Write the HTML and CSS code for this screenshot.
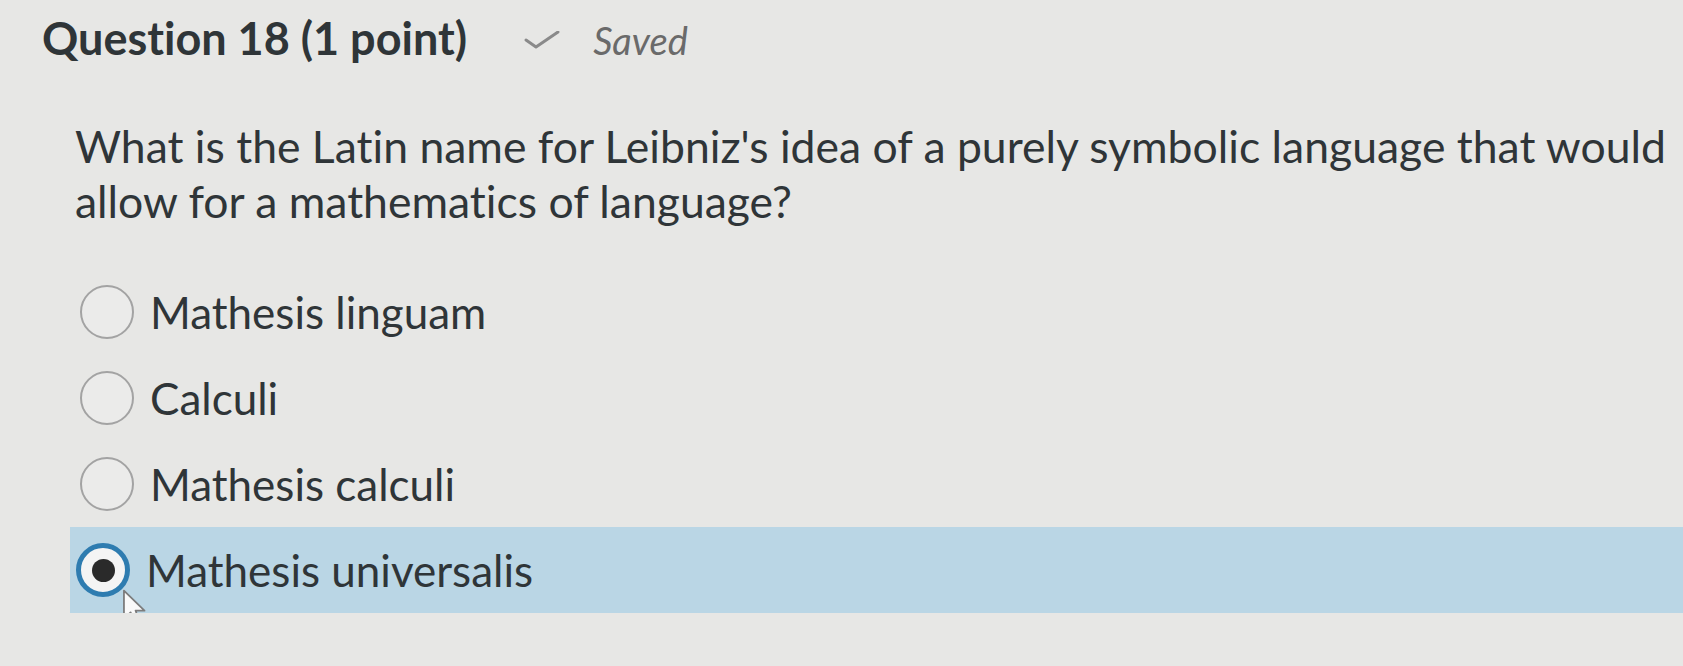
FILE: index.html
```html
<!DOCTYPE html>
<html lang="en">
<head>
    <meta charset="UTF-8">
    <meta name="viewport" content="width=device-width, initial-scale=1.0">
    <title>Question 18</title>
    <link rel="stylesheet" href="styles.css">
</head>
<body>
    <div class="question">
        <div class="header">
            <h2 class="title">Question 18 (1 point)</h2>
            <span class="saved">
                <svg class="check" viewBox="0 0 38 18" width="38" height="18">
                    <path d="M3 9 L13 16 L35 1" fill="none" stroke="#8a8a8a" stroke-width="3" stroke-linecap="round" stroke-linejoin="round"/>
                </svg>
                Saved
            </span>
        </div>

        <p class="text">What is the Latin name for Leibniz's idea of a purely symbolic language that would allow for a mathematics of language?</p>

        <div class="answers">
            <label class="answer">
                <span class="radio"></span>
                <span class="label">Mathesis linguam</span>
            </label>
            <label class="answer">
                <span class="radio"></span>
                <span class="label">Calculi</span>
            </label>
            <label class="answer">
                <span class="radio"></span>
                <span class="label">Mathesis calculi</span>
            </label>
            <label class="answer selected">
                <span class="radio"></span>
                <span class="label">Mathesis universalis</span>
                <svg class="cursor" viewBox="0 0 22 36" width="25" height="40">
                    <path d="M1.5 1.5 L1.5 27 L7.5 21 L11.5 33 L16 31 L12 19.5 L20 19.5 Z" fill="#fafafa" stroke="#7c7c7c" stroke-width="1.6" stroke-linejoin="round"/>
                </svg>
            </label>
        </div>
    </div>
</body>
</html>
```

FILE: styles.css
```css
body {
    margin: 0;
    background-color: #e7e7e5;
    font-family: Lato, "Open Sans", sans-serif;
    font-variant-ligatures: none;
    color: #2f3538;
}

.question {
    padding: 12px 0 0 0;
}

.header {
    display: flex;
    align-items: baseline;
    gap: 56px;
    padding-left: 42px;
}

.title {
    margin: 0;
    font-size: 45px;
    font-weight: 700;
    line-height: 52px;
}

.saved {
    font-size: 38px;
    font-style: italic;
    color: #6a6a6a;
    display: flex;
    align-items: baseline;
    gap: 32px;
}

.check {
    align-self: center;
}

.text {
    margin: 54px 12px 0 75px;
    font-size: 44.5px;
    line-height: 55px;
}

.answers {
    margin-top: 41px;
    display: flex;
    flex-direction: column;
}

.answer {
    display: flex;
    align-items: center;
    gap: 16px;
    height: 86px;
    padding-left: 80px;
    position: relative;
}

.radio {
    width: 54px;
    height: 54px;
    border: 2px solid #a3a3a3;
    border-radius: 50%;
    background-color: #ebebea;
    box-sizing: border-box;
    flex-shrink: 0;
}

.label {
    font-size: 44px;
}

.answer.selected {
    background-color: #bad6e5;
    margin-left: 70px;
    padding-left: 6px;
}

.answer.selected .radio {
    border: 5px solid #2e7cb0;
    background-color: #f4f4f4;
    display: flex;
    align-items: center;
    justify-content: center;
}

.answer.selected .radio::after {
    content: "";
    width: 23px;
    height: 23px;
    border-radius: 50%;
    background-color: #2a2a2a;
}

.cursor {
    position: absolute;
    left: 52px;
    top: 62px;
}
```
